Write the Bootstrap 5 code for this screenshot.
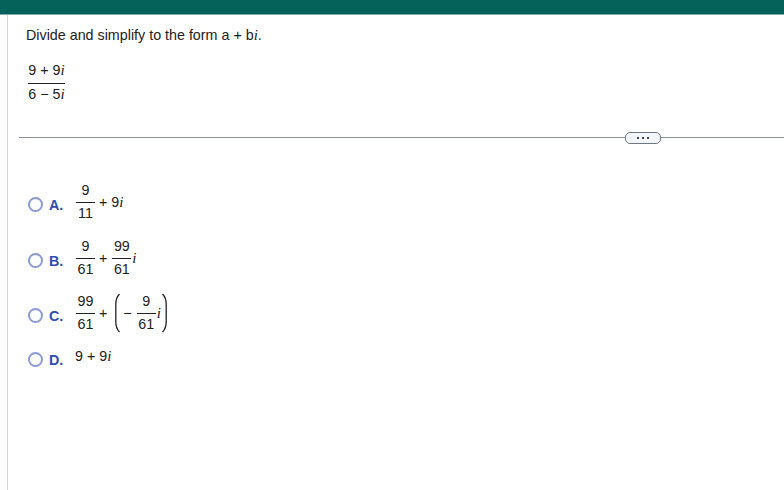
<!DOCTYPE html>
<html lang="en">
<head>
<meta charset="utf-8">
<title>Divide and simplify</title>
<link href="https://cdn.jsdelivr.net/npm/bootstrap@5.3.0/dist/css/bootstrap.min.css" rel="stylesheet">
<style>
html,body{height:490px;overflow:hidden;background:#fff}
body{font-family:"Liberation Sans",Arial,sans-serif;font-size:14.3px;line-height:16px;color:#222}
.topbar{height:15px;background:#04625a;border-bottom:1px solid #7fa8a8}
.pane{height:475px;margin-left:7px;border-left:1px solid #d4d4d4}
.prompt{padding:12px 0 0 18px;height:27px}
.expr{display:flex;align-items:flex-start;white-space:nowrap}
.frac{display:inline-flex;flex-direction:column;text-align:center;white-space:nowrap;flex:none}
.frac>span{display:block;height:19px}
.frac>span:first-child{border-bottom:1px solid #222;height:21px}
.frac>span:last-child{padding-top:2px}
.mi{font-family:"Liberation Serif","Times New Roman",serif;font-style:italic;font-size:15px}
.problem{margin:20px 0 0 20px;width:37px;display:flex}
.problem>span:first-child{height:22px}
.rule-wrap{margin:34px 0 0 11px;border-top:1px solid #8b9098;height:0;position:relative}
.more{position:absolute;left:606px;top:-6px;width:36px;height:12px;border:1px solid #6e7682;border-radius:5px;background:#f3f6fb;display:flex;align-items:center;justify-content:center;gap:3px}
.more i{width:2px;height:2px;background:#3c4450;display:block}
.choices{margin:44px 0 0 20px}
.choice{display:flex;align-items:flex-start;height:40px;margin-bottom:15px}
.radio{width:15px;height:15px;border:2px solid #8b9bd8;border-radius:50%;flex:none;margin:15px 6px 0 0}
.letter{width:27px;flex:none;color:#2f4db5;font-weight:700;margin-top:15px}
.opt-b{margin-top:16px}
.opt-d .radio{margin-top:4px}
.opt-d .letter{margin-top:4px}
.paren{display:block;width:7px;height:40px;flex:none;margin-left:7px}
.close-p{margin-left:0}
.on-bar{margin:12px 0 0 4px}
.frac-a{width:19px}
.frac-next{margin-left:5px}
.minus{margin:12px 0 0 2px}
.tail{margin:12px 0 0 1px}
.plain{margin-left:-1px}
</style>
</head>
<body>
<div class="topbar"></div>
<div class="pane">
  <div class="prompt">Divide and simplify to the form a + b<span class="mi">i</span>.</div>
  <div class="problem frac">
    <span>9 + 9<span class="mi">i</span></span>
    <span>6 − 5<span class="mi">i</span></span>
  </div>
  <div class="rule-wrap"><div class="more"><i></i><i></i><i></i></div></div>
  <div class="choices">
    <div class="choice opt-a">
      <span class="radio"></span><span class="letter">A.</span>
      <div class="expr"><span class="frac frac-a"><span>9</span><span>11</span></span><span class="on-bar">+ 9<span class="mi">i</span></span></div>
    </div>
    <div class="choice opt-b">
      <span class="radio"></span><span class="letter">B.</span>
      <div class="expr"><span class="frac frac-a"><span>9</span><span>61</span></span><span class="on-bar">+</span><span class="frac frac-a frac-next"><span>99</span><span>61</span></span><span class="mi tail">i</span></div>
    </div>
    <div class="choice opt-c">
      <span class="radio"></span><span class="letter">C.</span>
      <div class="expr"><span class="frac frac-a"><span>99</span><span>61</span></span><span class="on-bar">+</span>
        <svg class="paren" viewBox="0 0 7 40"><path d="M5.500 1C3 3.500 1.800 6 1.800 11V29C1.800 34 3 36.500 5.500 39" fill="none" stroke="#222" stroke-width="1.300"/></svg>
        <span class="minus">−</span><span class="frac frac-a frac-next"><span>9</span><span>61</span></span><span class="mi tail">i</span>
        <svg class="paren close-p" viewBox="0 0 7 40"><path d="M1.500 1C4 3.500 5.200 6 5.200 11V29C5.200 34 4 36.500 1.500 39" fill="none" stroke="#222" stroke-width="1.300"/></svg>
      </div>
    </div>
    <div class="choice opt-d">
      <span class="radio"></span><span class="letter">D.</span>
      <div class="expr plain"><span>9 + 9<span class="mi">i</span></span></div>
    </div>
  </div>
</div>
<script src="https://cdn.jsdelivr.net/npm/bootstrap@5.3.0/dist/js/bootstrap.bundle.min.js"></script>
</body>
</html>
